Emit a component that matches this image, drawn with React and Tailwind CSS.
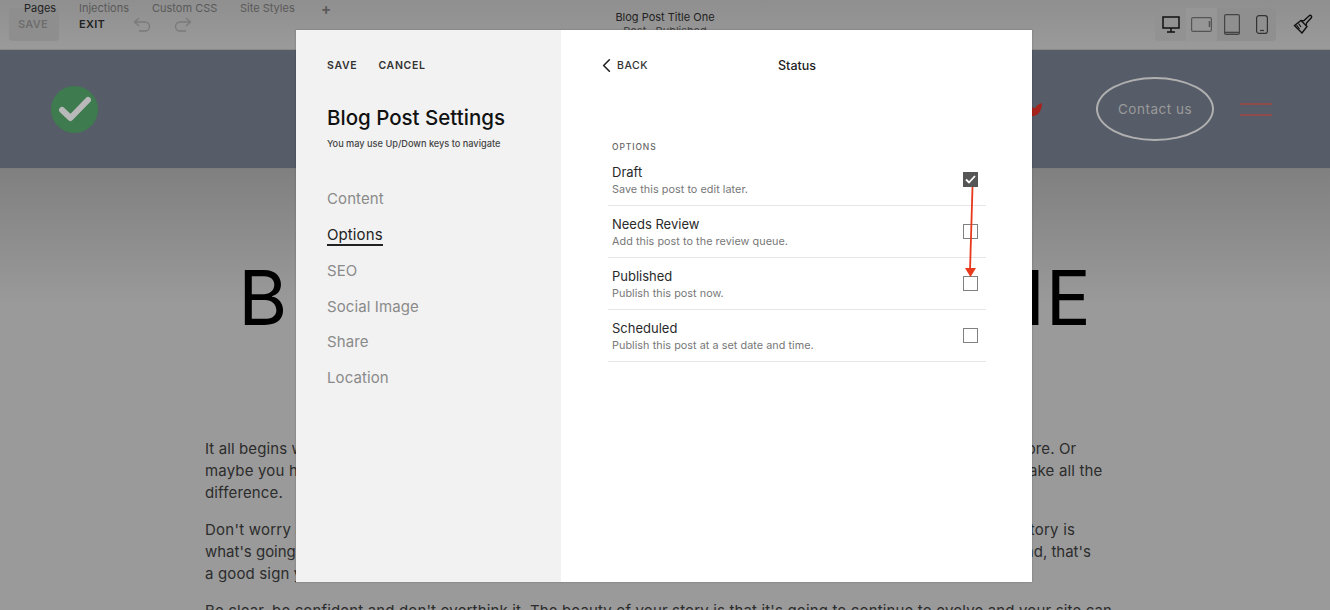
import { ChevronLeft } from 'lucide-react'

const tabs = [
  { label: 'Pages', width: 'w-[55px] text-[#222]' },
  { label: 'Injections', width: 'w-[73px]' },
  { label: 'Custom CSS', width: 'w-[88px]' },
  { label: 'Site Styles', width: 'w-[81px]' },
]
const menu = ['Content', 'Options', 'SEO', 'Social Image', 'Share', 'Location']
const options = [
  { title: 'Draft', note: 'Save this post to edit later.', checked: true },
  { title: 'Needs Review', note: 'Add this post to the review queue.' },
  { title: 'Published', note: 'Publish this post now.' },
  { title: 'Scheduled', note: 'Publish this post at a set date and time.' },
]

function Toolbar() {
  return (
    <header className="flex h-[50px] shrink-0 overflow-hidden border-b border-[#8a8a8a] bg-gradient-to-b from-[#8f8f8f] to-[#9a9a9a]">
      <div className="relative w-[500px] shrink-0 pl-[9px]">
        <div className="absolute left-[9px] top-2 h-[33px] w-[50px] rounded bg-[#8e8e8e]" />
        <div className="relative flex h-4 items-center pl-[15px] text-[11px] text-[#595959]">
          {tabs.map((t) => (
            <span key={t.label} className={t.width}>
              {t.label}
            </span>
          ))}
          <span className="text-[15px] font-bold leading-none">+</span>
        </div>
        <div className="relative flex h-[16px] items-center pl-[9px] text-[11px] font-semibold tracking-[0.3px]">
          <span className="w-[61px] text-[#6e6e6e]">SAVE</span>
          <span className="w-[54px] text-[#222]">EXIT</span>
          <svg width="18" height="15" viewBox="0 0 18 15" fill="none" stroke="#7a7a7a" strokeWidth="1.3" className="mr-[23px]">
            <path d="M6 1 1.500 5 6 9M1.500 5H12a4.500 4.500 0 0 1 0 9H6" />
          </svg>
          <svg width="18" height="15" viewBox="0 0 18 15" fill="none" stroke="#7a7a7a" strokeWidth="1.3">
            <path d="M12 1l4.500 4L12 9M16.500 5H6a4.500 4.500 0 0 0 0 9h6" />
          </svg>
        </div>
      </div>
      <div className="flex-1 pt-[10px] text-center text-[11px] leading-[14px] text-[#222]">
        <div>Blog Post Title One</div>
        <div className="text-[#444]">Post · Published</div>
      </div>
      <div className="flex w-[500px] shrink-0 items-center justify-end pb-[1px] pl-2 pr-[17px]">
        <div className="flex h-[33px] w-[121px] items-center rounded bg-[#8f8f8f]">
          <div className="flex h-full w-[31px] items-center justify-center rounded-l bg-[#929292]">
            <svg width="18" height="17" viewBox="0 0 18 17" fill="none" stroke="#111" strokeWidth="1.5">
              <rect x="1" y="1" width="16" height="11" />
              <path d="M9 12v4M5 16h8" />
            </svg>
          </div>
          <div className="flex h-full w-[31px] items-center justify-center bg-[#969696]">
            <svg width="21" height="15" viewBox="0 0 21 15" fill="none" stroke="#555" strokeWidth="1.2">
              <rect x="0.600" y="0.600" width="19.800" height="13.800" rx="1.500" />
              <path d="M18.500 4v6" strokeWidth="1.600" />
            </svg>
          </div>
          <div className="flex h-full w-[30px] items-center justify-center">
            <svg width="16" height="21" viewBox="0 0 16 21" fill="none" stroke="#444" strokeWidth="1.2">
              <rect x="0.600" y="0.600" width="14.800" height="19.800" rx="1.500" />
              <path d="M1 18.500h14" strokeWidth="1.600" />
            </svg>
          </div>
          <div className="flex h-full w-[29px] items-center justify-center">
            <svg width="12" height="19" viewBox="0 0 12 19" fill="none" stroke="#333" strokeWidth="1.2">
              <rect x="0.600" y="0.600" width="10.800" height="17.800" rx="2.500" />
              <path d="M4 15.500h4" />
            </svg>
          </div>
        </div>
        <svg width="20" height="20" viewBox="0 0 20 20" fill="none" stroke="#111" strokeWidth="1.400" className="ml-[17px]">
          <path d="M1.500 11.500 8 6.500l6 6L9 19z" />
          <path d="M8.500 7 11 6.500 16.500 1.500a1.500 1.500 0 0 1 2 2L13.500 9l-.5 3" />
          <path d="M5.500 9.500 8 13M3.500 11l3 4" strokeWidth="1.200" />
        </svg>
      </div>
    </header>
  )
}

function Banner() {
  return (
    <div className="flex h-[119px] shrink-0 items-center justify-between border-b border-[#7c7c7c] bg-[#565c68] pl-[51px] pr-[58px]">
      <div className="flex h-[47px] w-[47px] items-center justify-center rounded-full bg-[#3e7b4e]">
        <svg width="34" height="26" viewBox="0 0 34 26" fill="none" stroke="#b9b9b9" strokeWidth="6" strokeLinecap="round" strokeLinejoin="round">
          <path d="M4 14l8.500 8L30 4" />
        </svg>
      </div>
      <div className="flex items-center">
        <svg width="12" height="14" viewBox="0 0 12 14" className="mr-[54px]">
          <path d="M0 5 5 6 7.500 3 12 1c0 5-2 12-8 13l-4 0z" fill="#a5231b" />
        </svg>
        <div className="mr-[26px] flex h-[64px] w-[118px] items-center justify-center rounded-[50%] border-[2.500px] border-[#b0b0b0] text-[13.500px] tracking-[0.5px] text-[#9a9a9a]">
          Contact us
        </div>
        <div className="flex w-8 flex-col gap-[9px]">
          <div className="h-[2px] bg-[#8f4a4a]" />
          <div className="h-[2px] bg-[#8f4a4a]" />
        </div>
      </div>
    </div>
  )
}

function Article() {
  return (
    <main className="flex-1 bg-gradient-to-b from-[#808080] to-[#9a9a9a] to-[30%] px-[205px] text-[15px] leading-[22px] tracking-[0.15px] text-[#2c2c2c]">
      <h1 className="mt-[87px] -ml-[205px] w-[1330px] whitespace-nowrap text-center text-[75px] font-normal leading-[84px] tracking-[0.8px] text-black">
        <span className="mr-[7px]">B</span>LOG POST TITLE ONE
      </h1>
      <p className="mt-[98px] whitespace-nowrap">
        <span className="tracking-[0.11px]">It all begins with an idea. Maybe you want to launch a business. Maybe you want to turn a hobby into something more. Or</span><br />
        <span className="tracking-[0.17px]">maybe you have a creative project to share with the world. Whatever it is, the way you tell your story online can make all the</span><br />
        difference.
      </p>
      <p className="mt-[15px] whitespace-nowrap">
        <span className="tracking-[0.24px]">Don't worry about sounding professional. Sound like you. There are over 1.5 billion websites out there, but your story is</span><br />
        <span className="tracking-[-0.02px]">what's going to separate this one from the rest. If you read the words back and don't hear your own voice in your head, that's</span><br />
        a good sign you still have more work to do.
      </p>
      <p className="mt-[15px] whitespace-nowrap">
        Be clear, be confident and don't overthink it. The beauty of your story is that it's going to continue to evolve and your site can
      </p>
    </main>
  )
}

function OptionRow({ title, note, checked }) {
  return (
    <div className="flex h-[52px] items-center justify-between border-b border-[#e6e6e6] pl-1 pr-[8px]">
      <div className="pt-[1px]">
        <div className="text-[13px] leading-[16px] text-[#2a2a2a]">{title}</div>
        <div className="mt-[3px] text-[10.800px] leading-[14px] tracking-[0.05px] text-[#777]">{note}</div>
      </div>
      {checked ? (
        <div className="flex h-[15px] w-[15px] items-center justify-center bg-[#555]">
          <svg width="11" height="9" viewBox="0 0 11 9" fill="none" stroke="#fff" strokeWidth="1.800">
            <path d="M1 4.500l3 3L10 1" />
          </svg>
        </div>
      ) : (
        <div className="h-[15px] w-[15px] border border-[#808080]" />
      )}
    </div>
  )
}

function SettingsModal() {
  return (
    <div className="absolute left-[296px] top-[30px] flex h-[552px] w-[736px] shadow-[0_0_2px_rgba(0,0,0,0.25)]">
      <aside className="w-[265px] shrink-0 bg-[#f2f2f2] pl-[31px]">
        <div className="flex gap-[21px] pt-[29px] text-[10.500px] font-semibold leading-[13px] tracking-[0.7px] text-[#333]">
          <span>SAVE</span>
          <span>CANCEL</span>
        </div>
        <h2 className="mt-[32px] text-[20.500px] font-medium leading-[28px] text-[#111]">Blog Post Settings</h2>
        <p className="mt-[5px] text-[9.200px] font-medium leading-[13px] text-[#444]">You may use Up/Down keys to navigate</p>
        <nav className="mt-[39px] flex flex-col items-start gap-[15.500px] text-[15px] leading-[20px] tracking-[0.1px] text-[#8a8a8a]">
          {menu.map((item) =>
            item === 'Options' ? (
              <span key={item} className="border-b-2 border-[#222] leading-[19px] text-[#222]">
                {item}
              </span>
            ) : (
              <span key={item}>{item}</span>
            ),
          )}
        </nav>
      </aside>
      <section className="relative flex-1 bg-white pl-[47px] pr-[46px]">
        <div className="relative flex items-center justify-center pt-[27px]">
          <div className="absolute left-[-13px] top-[24px] flex items-center text-[10.500px] font-medium tracking-[0.5px] text-[#333]">
            <ChevronLeft size={23} strokeWidth={1.700} className="text-[#222]" />
            <span className="ml-[-1px]">BACK</span>
          </div>
          <span className="text-[12.500px] font-medium leading-[17px] text-[#222]">Status</span>
        </div>
        <div className="mt-[67px] pl-[4px] text-[8.500px] font-medium leading-[12px] tracking-[0.9px] text-[#666]">
          OPTIONS
        </div>
        <div className="mt-[1px]">
          {options.map((o) => (
            <OptionRow key={o.title} {...o} />
          ))}
        </div>
        {/* red annotation arrow */}
        <svg width="12" height="92" viewBox="0 0 12 92" className="absolute left-[404px] top-[157px]">
          <path d="M7.500 0 5 84" stroke="#e8391d" strokeWidth="1.800" />
          <path d="M0 81h11l-5.500 9z" fill="#e8391d" />
        </svg>
      </section>
    </div>
  )
}

export default function App() {
  return (
    <div className="relative flex h-[610px] w-[1330px] flex-col overflow-hidden font-['Inter',sans-serif]">
      <Toolbar />
      <Banner />
      <Article />
      <SettingsModal />
    </div>
  )
}
